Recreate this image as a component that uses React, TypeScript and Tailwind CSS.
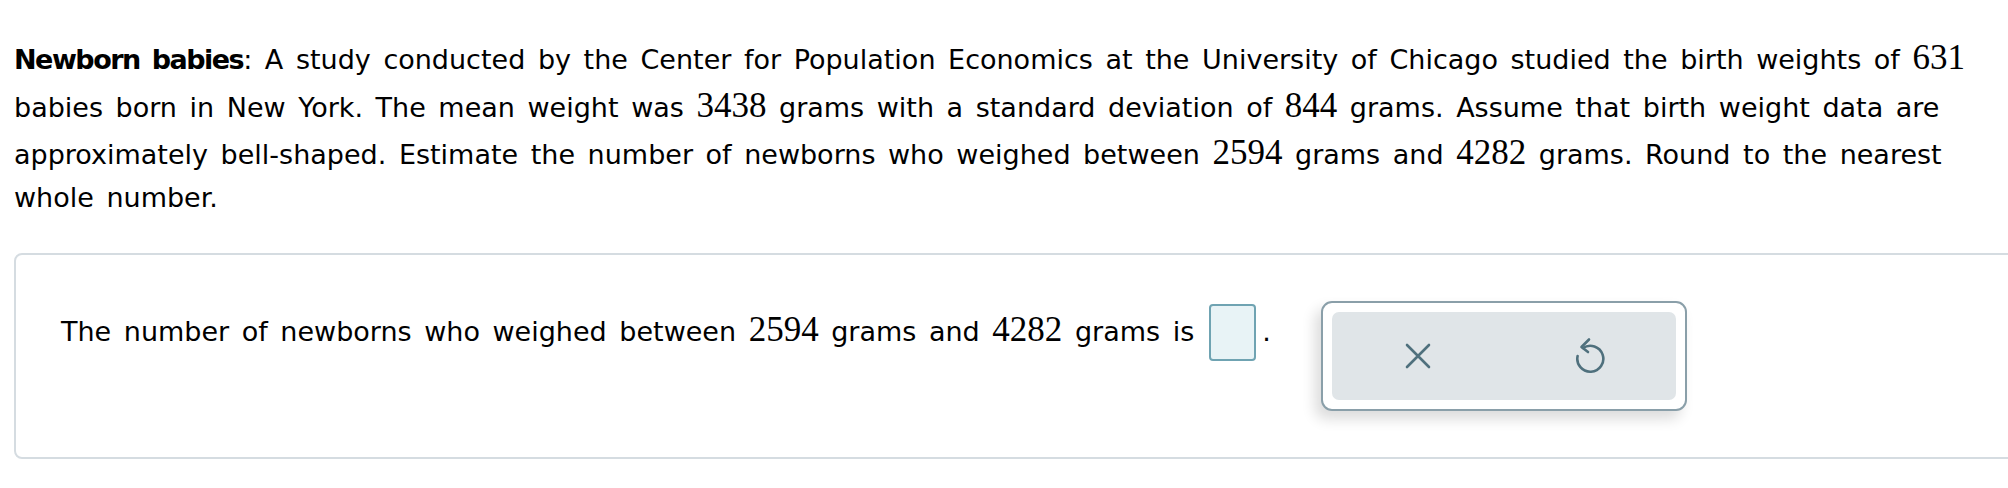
function Num({ children }: { children: React.ReactNode }) {
  return <span className="font-['Liberation_Serif',serif] text-[35px] leading-none [word-spacing:0]">{children}</span>;
}

function CloseIcon() {
  return (
    <svg width="26" height="26" viewBox="0 0 26 26" fill="none" stroke="#4f707d" strokeWidth="2.6" strokeLinecap="round">
      <path d="M2 2 L24 24 M24 2 L2 24" />
    </svg>
  );
}

function UndoIcon() {
  return (
    <svg width="30" height="38" viewBox="26 8 30 38" fill="none" stroke="#4f707d" strokeWidth="2.6" strokeLinecap="round" strokeLinejoin="round">
      <path d="M34 19 A13 13 0 1 1 28.6 27" />
      <path d="M40 10.5 L32.5 18 L39 23" />
    </svg>
  );
}

export default function App() {
  return (
    <div className="w-screen overflow-x-hidden bg-white font-['DejaVu_Sans','Verdana',sans-serif] text-[27px] text-black [word-spacing:4px]">
      {/* Question */}
      <div className="pl-[14px] pt-[36px]">
        <div className="flex h-[48px] items-center whitespace-nowrap">
          <span>
            <b className="tracking-[-1.5px]">Newborn babies</b>: A study conducted by the Center for Population Economics at the University of Chicago studied the birth weights of <Num>631</Num>
          </span>
        </div>
        <div className="flex h-[48px] items-center whitespace-nowrap">
          <span>
            babies born in New York. The mean weight was <Num>3438</Num> grams with a standard deviation of <Num>844</Num> grams. Assume that birth weight data are
          </span>
        </div>
        <div className="flex h-[46px] items-center whitespace-nowrap">
          <span>
            approximately bell-shaped. Estimate the number of newborns who weighed between <Num>2594</Num> grams and <Num>4282</Num> grams. Round to the nearest
          </span>
        </div>
        <div className="flex h-[40px] items-center whitespace-nowrap">
          <span>whole number.</span>
        </div>
      </div>

      {/* Answer card */}
      <div className="mt-[35px] ml-[14px] mr-[-40px] h-[206px] rounded-[8px] border-2 border-[#d5dce1] pl-[45px] pt-[47px]">
        <div className="flex items-start">
          <div className="flex h-[60px] items-center whitespace-nowrap">
            <span>
              The number of newborns who weighed between <Num>2594</Num> grams and <Num>4282</Num> grams is
            </span>
            <span className="ml-[15px] inline-block h-[57px] w-[47px] rounded-[4px] border-2 border-[#6fa3b2] bg-[#e8f3f6]" />
            <span className="ml-[6px]">.</span>
          </div>

          <div className="ml-[50px] -mt-[1px] h-[110px] w-[366px] rounded-[11px] border-2 border-[#8a9fa9] bg-white p-[9px] shadow-[-6px_8px_14px_rgba(0,0,0,0.14)]">
            <div className="grid h-full grid-cols-2 rounded-[7px] bg-[#e0e5e8]">
              <div className="flex items-center justify-center">
                <CloseIcon />
              </div>
              <div className="flex items-center justify-center">
                <UndoIcon />
              </div>
            </div>
          </div>
        </div>
      </div>
    </div>
  );
}
